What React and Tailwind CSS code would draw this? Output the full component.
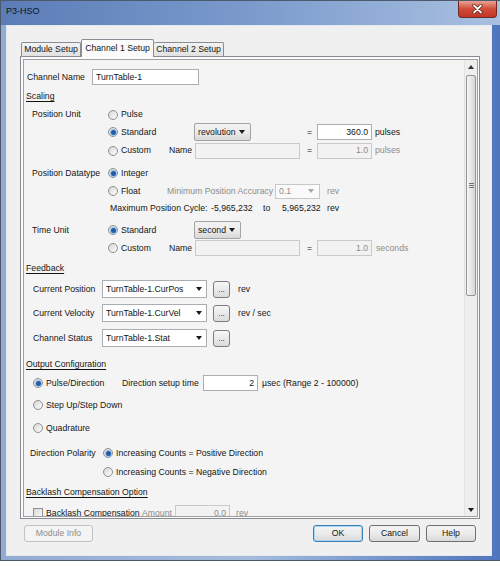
import React from 'react'

function Radio({ on }) {
  return (
    <span className="flex h-[10px] w-[10px] shrink-0 items-center justify-center rounded-full border border-[#8e8f8f] bg-linear-to-br from-[#d6d6d6] to-[#fdfdfd]">
      {on && <span className="h-[5px] w-[5px] rounded-full bg-[#245ca6] shadow-[0_0_0_1px_#9cc4ea]" />}
    </span>
  )
}

function Opt({ on, label, className = '' }) {
  return (
    <span className={`flex shrink-0 items-center gap-[3px] ${className}`}>
      <Radio on={on} />
      <span>{label}</span>
    </span>
  )
}

function Field({ value = '', className = '', right, disabled }) {
  return (
    <span
      className={`flex h-[16px] shrink-0 items-center border px-[3px] ${right ? 'justify-end' : ''} ${
        disabled ? 'border-[#cacaca] bg-[#f2f2f2] text-[#8c8c8c]' : 'border-[#abadb3] bg-white'
      } ${className}`}
    >
      {value}
    </span>
  )
}

function Caret({ grey }) {
  return (
    <span
      className={`h-0 w-0 shrink-0 border-x-[3px] border-t-[4px] border-x-transparent ${
        grey ? 'border-t-[#a8a8a8]' : 'border-t-[#1a1a1a]'
      }`}
    />
  )
}

// button-style combo (revolution / second)
function Combo({ value, className = '' }) {
  return (
    <span
      className={`flex h-[18px] shrink-0 items-center justify-between rounded-[2px] border border-[#a3a3a3] bg-linear-to-b from-[#f3f3f3] via-[#ececec] to-[#d8d8d8] pl-[3px] pr-[5px] ${className}`}
    >
      <span>{value}</span>
      <Caret />
    </span>
  )
}

// editable white combo (feedback tags)
function EditCombo({ value }) {
  return (
    <span className="flex h-[18px] w-[105px] shrink-0 items-center justify-between border border-[#abadb3] bg-white pl-[3px] pr-[4px]">
      <span>{value}</span>
      <Caret />
    </span>
  )
}

function Dots() {
  return (
    <span className="ml-[6px] flex h-[17px] w-[17px] shrink-0 items-end justify-center rounded-[3px] border border-[#7d7d7d] bg-linear-to-b from-[#f7f7f7] to-[#dcdcdc] pb-[3px] text-[8px]">
      ...
    </span>
  )
}

function Heading({ children, className = '' }) {
  return (
    <div className={`flex items-center pl-[2px] ${className}`}>
      <span className="underline underline-offset-[2px]">{children}</span>
    </div>
  )
}

function Btn({ children, className = '' }) {
  return (
    <span
      className={`flex h-[17px] shrink-0 items-center justify-center rounded-[3px] border bg-linear-to-b from-[#f4f4f4] via-[#ebebeb] to-[#d9d9d9] ${className}`}
    >
      {children}
    </span>
  )
}

function Scrollbar() {
  return (
    <div className="flex w-[13px] shrink-0 flex-col border-l border-[#e2e2e2] bg-[#eeeeee]">
      <div className="flex h-[13px] items-center justify-center">
        <span className="h-0 w-0 border-x-[3px] border-b-[4px] border-x-transparent border-b-[#333]" />
      </div>
      <div className="mx-[1px] mt-[2px] flex h-[221px] items-center justify-center rounded-[2px] border border-[#959595] bg-linear-to-r from-[#f6f6f6] to-[#d6d6d6]">
        <div className="flex flex-col gap-[1px]">
          <span className="h-[1px] w-[5px] bg-[#6f6f6f]" />
          <span className="h-[1px] w-[5px] bg-[#6f6f6f]" />
          <span className="h-[1px] w-[5px] bg-[#6f6f6f]" />
        </div>
      </div>
      <div className="flex-1" />
      <div className="flex h-[13px] items-center justify-center">
        <Caret />
      </div>
    </div>
  )
}

function Content() {
  const grey = 'text-[#8c8c8c]'
  return (
    <div className="flex h-full w-[440px] flex-col overflow-hidden pt-[8px]">
      {/* Channel name */}
      <div className="flex h-[18px] shrink-0 items-center pl-[3px]">
        <span className="w-[65px]">Channel Name</span>
        <Field value="TurnTable-1" className="w-[107px]" />
      </div>

      {/* Scaling */}
      <Heading className="h-[20px] shrink-0">Scaling</Heading>
      <div className="flex h-[17px] shrink-0 items-center pl-[8px]">
        <span className="w-[76px]">Position Unit</span>
        <Opt label="Pulse" />
      </div>
      <div className="flex h-[18px] shrink-0 items-center pl-[84px]">
        <Opt on label="Standard" className="w-[86px]" />
        <Combo value="revolution" className="w-[57px]" />
        <span className="w-[66px] pr-[5px] text-right">=</span>
        <Field value="360.0" right className="w-[55px]" />
        <span className="ml-[3px]">pulses</span>
      </div>
      <div className="flex h-[19px] shrink-0 items-center pl-[84px]">
        <Opt label="Custom" className="w-[61px]" />
        <span className="w-[26px]">Name</span>
        <Field disabled className="h-[15px] w-[105px]" />
        <span className="w-[17px] pr-[5px] text-right">=</span>
        <Field value="1.0" right disabled className="h-[15px] w-[55px]" />
        <span className={`ml-[3px] ${grey}`}>pulses</span>
      </div>

      <div className="mt-[4px] flex h-[18px] shrink-0 items-center pl-[8px]">
        <span className="w-[76px]">Position Datatype</span>
        <Opt on label="Integer" />
      </div>
      <div className="flex h-[18px] shrink-0 items-center pl-[84px]">
        <Opt label="Float" className="w-[59px]" />
        <span className={`w-[108px] ${grey}`}>Minimum Position Accuracy</span>
        <span className="flex h-[15px] w-[45px] shrink-0 items-center justify-between border border-[#c8c8c8] bg-[#fafafa] pl-[3px] pr-[5px] text-[#8c8c8c]">
          <span>0.1</span>
          <Caret grey />
        </span>
        <span className={`ml-[7px] ${grey}`}>rev</span>
      </div>
      <div className="flex h-[16px] shrink-0 items-center pl-[86px]">
        <span className="w-[101px]">Maximum Position Cycle:</span>
        <span className="w-[52px]">-5,965,232</span>
        <span className="w-[19px]">to</span>
        <span className="w-[45px]">5,965,232</span>
        <span>rev</span>
      </div>

      {/* Time unit */}
      <div className="mt-[5px] flex h-[18px] shrink-0 items-center pl-[8px]">
        <span className="w-[76px]">Time Unit</span>
        <Opt on label="Standard" className="w-[86px]" />
        <Combo value="second" className="w-[47px]" />
      </div>
      <div className="flex h-[18px] shrink-0 items-center pl-[84px]">
        <Opt label="Custom" className="w-[61px]" />
        <span className="w-[26px]">Name</span>
        <Field disabled className="h-[15px] w-[105px]" />
        <span className="w-[17px] pr-[5px] text-right">=</span>
        <Field value="1.0" right disabled className="h-[15px] w-[55px]" />
        <span className={`ml-[4px] ${grey}`}>seconds</span>
      </div>

      {/* Feedback */}
      <Heading className="h-[22px] shrink-0">Feedback</Heading>
      <div className="flex h-[20px] shrink-0 items-center pl-[9px]">
        <span className="w-[69px]">Current Position</span>
        <EditCombo value="TurnTable-1.CurPos" />
        <Dots />
        <span className="ml-[8px]">rev</span>
      </div>
      <div className="mt-[4px] flex h-[20px] shrink-0 items-center pl-[9px]">
        <span className="w-[69px]">Current Velocity</span>
        <EditCombo value="TurnTable-1.CurVel" />
        <Dots />
        <span className="ml-[8px]">rev / sec</span>
      </div>
      <div className="mt-[5px] flex h-[20px] shrink-0 items-center pl-[9px]">
        <span className="w-[69px]">Channel Status</span>
        <EditCombo value="TurnTable-1.Stat" />
        <Dots />
      </div>

      {/* Output configuration */}
      <Heading className="mt-[6px] h-[20px] shrink-0">Output Configuration</Heading>
      <div className="flex h-[18px] shrink-0 items-center pl-[9px]">
        <Opt on label="Pulse/Direction" className="w-[89px]" />
        <span className="w-[81px]">Direction setup time</span>
        <Field value="2" right className="w-[55px]" />
        <span className="ml-[4px]">µsec (Range 2 - 100000)</span>
      </div>
      <div className="mt-[4px] flex h-[18px] shrink-0 items-center pl-[9px]">
        <Opt label="Step Up/Step Down" />
      </div>
      <div className="mt-[5px] flex h-[18px] shrink-0 items-center pl-[9px]">
        <Opt label="Quadrature" />
      </div>
      <div className="mt-[7px] flex h-[18px] shrink-0 items-center pl-[6px]">
        <span className="w-[73px]">Direction Polarity</span>
        <Opt on label="Increasing Counts = Positive Direction" />
      </div>
      <div className="mt-[1px] flex h-[18px] shrink-0 items-center pl-[79px]">
        <Opt label="Increasing Counts = Negative Direction" />
      </div>

      {/* Backlash */}
      <Heading className="mt-[1px] h-[20px] shrink-0">Backlash Compensation Option</Heading>
      <div className="mt-[2px] flex h-[18px] shrink-0 items-center pl-[9px]">
        <span className="h-[10px] w-[10px] shrink-0 border border-[#8e8f8f] bg-linear-to-br from-[#d6d6d6] to-[#fdfdfd]" />
        <span className="ml-[3px] w-[96px]">Backlash Compensation</span>
        <span className={`w-[33px] ${grey}`}>Amount</span>
        <Field value="0.0" right disabled className="h-[15px] w-[55px]" />
        <span className={`ml-[6px] ${grey}`}>rev</span>
      </div>
    </div>
  )
}

export default function App() {
  return (
    <div className="h-[567px] w-[500px] overflow-hidden bg-white font-['Liberation_Sans',Arial,sans-serif] text-[8.7px] leading-none text-[#141414]">
      <div className="flex h-[561px] flex-col border-l border-b border-[#4d5a6e] bg-linear-to-r from-[#93abd3] via-[#a4bbdc] to-[#4f75bd]">
        {/* Title bar */}
        <div className="flex h-[25px] shrink-0 items-start border-t border-[#4d5a6e] bg-linear-to-r from-[#5b7cb6] via-[#7b9bcd] to-[#a9c0e0]">
          <span className="pl-[5px] pt-[6px] text-[9px] text-[#0e1626]">P3-HSO</span>
          <div className="flex-1" />
          <span className="mr-[3px] flex h-[17px] w-[39px] items-center justify-center rounded-b-[4px] border border-t-0 border-[#6e2a22] bg-linear-to-b from-[#e8a293] via-[#cf4a37] to-[#c43526]">
            <svg width="11" height="10" viewBox="0 0 11 10">
              <path d="M2 1.5 L9 8.5 M9 1.5 L2 8.5" stroke="#5a1a14" strokeWidth="3.2" strokeLinecap="round" />
              <path d="M2 1.5 L9 8.5 M9 1.5 L2 8.5" stroke="#ffffff" strokeWidth="1.8" strokeLinecap="round" />
            </svg>
          </span>
        </div>

        {/* Body */}
        <div className="ml-[5px] mr-[8px] flex h-[531px] shrink-0 flex-col border border-[#e4e9f0] bg-[#f0f0f0] pl-[13px] pt-[13px]">
          {/* Tabs */}
          <div className="flex h-[17px] items-end pl-[1px]">
            <span className="flex h-[14px] w-[60px] items-center justify-center rounded-t-[2px] border border-b-0 border-[#898c95] bg-linear-to-b from-[#f3f3f3] to-[#e1e1e1]">
              Module Setup
            </span>
            <span className="relative z-10 -mb-[1px] flex h-[18px] w-[73px] items-center justify-center rounded-t-[2px] border border-b-0 border-[#898c95] bg-[#fbfbfb] pb-[1px]">
              Channel 1 Setup
            </span>
            <span className="flex h-[14px] w-[70px] items-center justify-center rounded-t-[2px] border border-b-0 border-l-0 border-[#898c95] bg-linear-to-b from-[#f3f3f3] to-[#e1e1e1]">
              Channel 2 Setup
            </span>
          </div>

          {/* Tab panel */}
          <div className="h-[463px] w-[460px] border border-[#898c95] bg-[#fbfbfb] pb-[1px] pl-[2px] pr-[1px] pt-[2px]">
            <div className="flex h-full border border-[#a0a0a0] bg-[#f4f4f4]">
              <Content />
              <Scrollbar />
            </div>
          </div>

          {/* Buttons */}
          <div className="mt-[6px] flex w-[460px] items-center pl-[4px] pr-[4px]">
            <span className="flex h-[17px] w-[69px] items-center justify-center rounded-[3px] border border-[#bfc3c6] bg-[#f4f4f4] text-[#8c8c8c]">
              Module Info
            </span>
            <div className="flex-1" />
            <Btn className="w-[50px] border-[#3c7fb1] shadow-[inset_0_0_0_1px_#a8d8f4]">OK</Btn>
            <Btn className="ml-[6px] w-[51px] border-[#707070]">Cancel</Btn>
            <Btn className="ml-[6px] w-[50px] border-[#707070]">Help</Btn>
          </div>
        </div>
      </div>
    </div>
  )
}
